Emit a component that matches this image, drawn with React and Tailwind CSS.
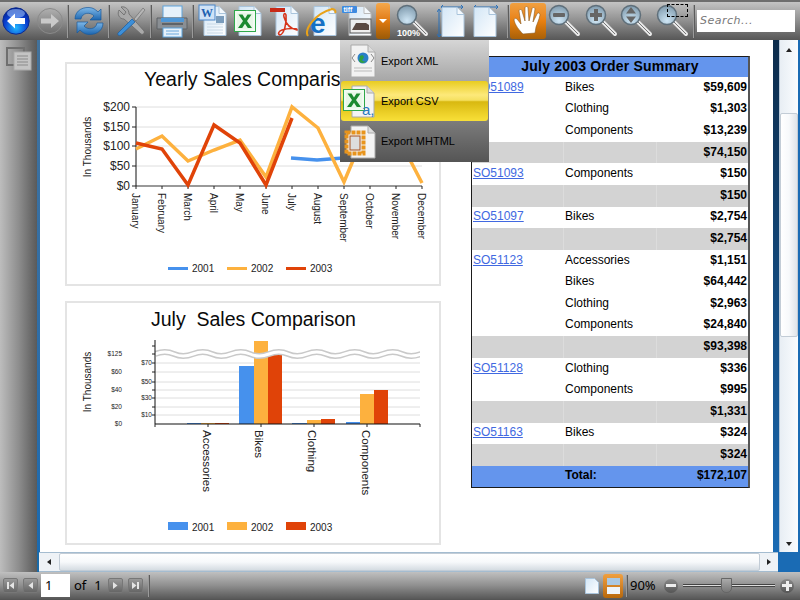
import React from 'react'

const months = ['January','February','March','April','May','June','July','August','September','October','November','December']
const arial = { fontFamily: '"Liberation Sans", Arial, sans-serif' }

const rows = [
  ['SO51089','Bikes','$59,609'],['','Clothing','$1,303'],['','Components','$13,239'],['sum','','$74,150'],
  ['SO51093','Components','$150'],['sum','','$150'],
  ['SO51097','Bikes','$2,754'],['sum','','$2,754'],
  ['SO51123','Accessories','$1,151'],['','Bikes','$64,442'],['','Clothing','$2,963'],['','Components','$24,840'],['sum','','$93,398'],
  ['SO51128','Clothing','$336'],['','Components','$995'],['sum','','$1,331'],
  ['SO51163','Bikes','$324'],['sum','','$324'],
]

const Defs = () => (
  <svg width="0" height="0" className="absolute">
    <defs>
      <linearGradient id="doc" x1="0" y1="0" x2="1" y2="1"><stop offset="0" stopColor="#d3e6f6"/><stop offset="1" stopColor="#ffffff"/></linearGradient>
      <radialGradient id="ball" cx="0.5" cy="0.75" r="0.8"><stop offset="0" stopColor="#22b8ff"/><stop offset="0.55" stopColor="#0a3fd0"/><stop offset="1" stopColor="#021a80"/></radialGradient>
      <linearGradient id="gray" x1="0" y1="0" x2="0" y2="1"><stop offset="0" stopColor="#b0b0b0"/><stop offset="1" stopColor="#6d6d6d"/></linearGradient>
      <linearGradient id="blue" x1="0" y1="0" x2="0" y2="1"><stop offset="0" stopColor="#7fb8e8"/><stop offset="1" stopColor="#1c66b0"/></linearGradient>
      <radialGradient id="lens" cx="0.5" cy="0.8" r="0.8"><stop offset="0" stopColor="#cfe6f5"/><stop offset="1" stopColor="#7f9aad"/></radialGradient>
      <clipPath id="plot"><rect x="155" y="340" width="265" height="90"/></clipPath>
    </defs>
  </svg>
)

const Page = ({ stroke = '#a9c4dc' }) => (
  <>
    <path d="M6 2.5h15l7 7v22H6z" fill="url(#doc)" stroke={stroke}/>
    <path d="M21 2.5v7h7" fill="#f4f9fd" stroke={stroke}/>
  </>
)

const Ico = ({ w = 32, children, className = '' }) => (
  <svg width={w} height="34" viewBox={`0 0 ${w} 34`} className={`shrink-0 ${className}`}>{children}</svg>
)

const Sep = ({ h = 'h-[33px]' }) => <div className={`w-[2px] ${h} bg-[#9a9a9a] border-r border-[#5c5c5c] shrink-0`} />
const Sep2 = ({ ml }) => <div className={ml}><Sep /></div>

const Magnifier = ({ children }) => (
  <Ico w={33}>
    <path d="M18 18l12 12" stroke="#e8e8e8" strokeWidth="4" strokeLinecap="round"/>
    <path d="M18 18l12 12" stroke="#777" strokeWidth="1" />
    <circle cx="11" cy="11" r="9.5" fill="url(#lens)" stroke="#5f6f7a" strokeWidth="1.5"/>
    {children}
  </Ico>
)

function ExcelBadge({ x = 0, y = 0 }) {
  return (
    <g transform={`translate(${x} ${y})`}>
      <rect x="0.5" y="0.5" width="21" height="21" fill="#f2fbf2" stroke="#2fa84a"/>
      <rect x="3" y="3" width="16" height="16" fill="#e8f7e8"/>
      <path d="M4.5 4.5h4l2.5 4 2.5-4h4l-4.5 6.5 5 7h-4.2l-2.8-4.3-2.8 4.3h-4.2l5-7z" fill="#1c8a30"/>
    </g>
  )
}

function Toolbar() {
  return (
    <div className="h-[40px] flex items-center shrink-0 pl-[2px] bg-gradient-to-b from-[#c4c4c4] via-[#8f8f8f] to-[#575757] border-t-2 border-[#6e6e6e]">
      <svg width="28" height="28" viewBox="0 0 28 28" className="shrink-0">
        <circle cx="14" cy="14" r="13.2" fill="url(#ball)" stroke="#0a2a90"/>
        <ellipse cx="14" cy="6.5" rx="9" ry="4.5" fill="#8fb4f5" opacity="0.65"/>
        <path d="M5 14l8-7.5v4.5h10v6H13v4.5z" fill="#fff"/>
      </svg>
      <svg width="28" height="28" viewBox="0 0 28 28" className="shrink-0 ml-[6px]">
        <circle cx="14" cy="14" r="12.5" fill="url(#gray)" stroke="#8a8a8a"/>
        <path d="M23 14l-8-7v4.5H5v5h10V21z" fill="#c9c9c9"/>
      </svg>
      <Sep2 ml="ml-[3px]" />
      <Ico w={33} className="ml-[3px] -mr-[1px]">
        <path d="M3 15C3 6 12 2 20 4c3 1 5 3 6 4l3-3v11H18l4-4c-3-4-12-4-13 3z" fill="url(#blue)" stroke="#1a5a9c" strokeWidth="0.7"/>
        <path d="M31 19c0 9-9 13-17 11-3-1-5-3-6-4l-3 3V18h11l-4 4c3 4 12 4 13-3z" fill="url(#blue)" stroke="#1a5a9c" strokeWidth="0.7"/>
      </Ico>
      <Sep2 ml="ml-[4px]" />
      <Ico w={32} className="ml-[4px]">
        <path d="M7 3l5 5-2 3-5-5c-2 4 0 9 5 9l17 15c2 1 4-1 3-3L15 10c0-5-4-8-8-7z" fill="#a9a9a9" stroke="#6a6a6a" strokeWidth="0.8"/>
        <path d="M29 4l-9 11 2 2 9-11z" fill="#b5b5b5" stroke="#666" strokeWidth="0.6"/>
        <path d="M18 15l-14 14c-1 2 1 3 3 2l14-13z" fill="#3d8fd8" stroke="#1b5c9e" strokeWidth="0.7"/>
      </Ico>
      <Sep2 ml="ml-[4px]" />
      <Ico w={32} className="ml-[4px]">
        <rect x="7" y="2" width="19" height="12" fill="#e6f1fa" stroke="#5ea4dc"/>
        <path d="M1 14h30v11H1z" fill="#8a8f94" stroke="#5c6064"/>
        <rect x="5" y="14" width="23" height="4" fill="#4f97d6"/>
        <rect x="6" y="19" width="21" height="2" fill="#5e6368"/>
        <rect x="7" y="24" width="19" height="9" fill="#e6f1fa" stroke="#5ea4dc"/>
        <path d="M10 27h13M10 30h13" stroke="#6aa8dc"/>
      </Ico>
      <Sep2 ml="ml-[4px]" />
      <Ico w={32} className="ml-[4px]">
        <Page />
        <rect x="1" y="1" width="16" height="15" fill="#cfe2f6" stroke="#4a86c8"/>
        <text x="3" y="13" fontSize="12" fontWeight="700" fontFamily="Liberation Serif" fill="#1d5fb0">W</text>
        <rect x="18" y="12" width="8" height="7" fill="#7a9cbc"/>
        <path d="M9 20h16M9 23h16M9 26h16M9 29h16" stroke="#c8d8e6"/>
      </Ico>
      <Ico w={33} className="ml-[3px]">
        <Page />
        <ExcelBadge x="1" y="6" />
      </Ico>
      <Ico w={32} className="ml-[4px]">
        <Page />
        <rect x="0" y="4" width="15" height="4" fill="#c82a18"/>
        <path d="M10 31c4-1 7-12 6-20-1-3-3-1-2 2 2 7 7 12 13 13 1-2-9-2-15 0-3 1-5 4-2 5z" fill="none" stroke="#d6351c" strokeWidth="1.6"/>
      </Ico>
      <Ico w={34} className="ml-[4px]">
        <g transform="translate(2 0)"><Page /></g>
        <text x="4" y="29" fontSize="28" fontWeight="700" fontFamily="Liberation Sans" fill="#1670c4">e</text>
        <path d="M2 32C-2 26 8 10 26 5c3 0 4 2 3 4" fill="none" stroke="#e8a21a" strokeWidth="2"/>
      </Ico>
      <Ico w={33} className="ml-[2px]">
        <g transform="translate(1 0)"><Page stroke="#bbbbbb" /></g>
        <rect x="0" y="2" width="15" height="7" rx="1" fill="#3d8ae0"/>
        <text x="1.5" y="8" fontSize="7" fontWeight="700" fontFamily="Liberation Sans" fill="#fff">tiff</text>
        <rect x="8" y="15" width="21" height="14" fill="#eee" stroke="#555"/>
        <path d="M10 26l4-7h10l3 2v5z" fill="#5b4a42"/>
      </Ico>
      <div className="ml-[1px] w-[14px] h-[36px] shrink-0 rounded-[3px] flex items-center justify-center bg-gradient-to-b from-[#f5a84a] via-[#e07a10] to-[#9a5a08]">
        <div className="w-0 h-0 border-l-[4px] border-r-[4px] border-t-[4px] border-l-transparent border-r-transparent border-t-white" />
      </div>
      <div className="ml-[6px] relative shrink-0">
        <Magnifier />
        <span className="absolute left-[1px] top-[24px] text-[9px] font-bold text-white leading-[10px]" style={arial}>100%</span>
      </div>
      <Ico w={28} className="ml-[8px] -mr-[2px]">
        <path d="M2 6v27M0 8l2-3 2 3M0 30l2 3 2-3" stroke="#2a70b8" fill="none"/>
        <path d="M4 3h22M6 1l-2 2 2 2M24 1l2 2-2 2" stroke="#2a70b8" fill="none"/>
        <g transform="translate(-1 1)"><Page /></g>
      </Ico>
      <Ico w={28} className="ml-[10px]">
        <path d="M1 3h24M3 1L1 3l2 2M23 1l2 2-2 2" stroke="#2a70b8" fill="none"/>
        <g transform="translate(-5 1)"><Page /></g>
      </Ico>
      <Sep2 ml="ml-[6px]" />
      <div className="ml-[1px] w-[36px] h-[36px] shrink-0 rounded-[3px] flex items-center justify-center bg-gradient-to-b from-[#f0a040] via-[#e88010] to-[#a86008]">
        <svg width="30" height="32" viewBox="0 0 30 32">
          <path d="M10 29C6 25 2 20 1 15c0-2 2-2 3-1l4 5L6 6c0-2 3-2 3 0l3 10 0-13c0-2 3-2 3 0l1 13 3-12c0-2 3-2 3 0l-2 13 4-8c1-2 3-1 3 1-1 5-3 9-4 12l-1 6z" fill="#fff" stroke="#8a5a20" strokeWidth="0.6"/>
        </svg>
      </div>
      <div className="ml-[2px] shrink-0"><Magnifier><rect x="5" y="9" width="12" height="4" rx="1" fill="#666"/></Magnifier></div>
      <div className="ml-[4px] shrink-0"><Magnifier><path d="M9 5h4v4h4v4h-4v4H9v-4H5V9h4z" fill="#666"/></Magnifier></div>
      <div className="ml-[2px] shrink-0"><Magnifier><path d="M11 3l5 6.5H6zM11 19l5-6.5H6z" fill="#666"/></Magnifier></div>
      <div className="ml-[3px] relative shrink-0">
        <Magnifier />
        <div className="absolute left-[11px] top-[0px] w-[21px] h-[13px] border border-dashed border-black" />
      </div>
      <Sep2 ml="ml-[4px]" />
      <div className="ml-[2px] w-[98px] h-[22px] bg-white flex items-center pl-[3px] text-[11px] italic tracking-[0.5px] text-[#777] shrink-0" style={{ fontFamily: '"DejaVu Sans", sans-serif' }}>Search...</div>
    </div>
  )
}

function Menu() {
  return (
    <div className="absolute left-[340px] top-[40px] w-[149px] h-[122px] z-10 bg-gradient-to-b from-[#d6d6d6] via-[#909090] to-[#555555] flex flex-col text-[11px] text-black" style={arial}>
      <div className="h-[41px] flex items-center pl-[10px] gap-[5px]">
        <svg width="26" height="34" viewBox="0 0 26 34">
          <path d="M1 1h17l7 7v25H1z" fill="#f2f2f2" stroke="#aaa"/><path d="M18 1v7h7" fill="#ddd" stroke="#aaa"/>
          <circle cx="13" cy="14" r="5.5" fill="#2a7fc8"/><path d="M10 12c3-2 5 1 3 3s1 3 3 2c-2 3-6 2-7 0z" fill="#2fa040"/>
          <path d="M5 10l-3 4 3 4M21 10l3 4-3 4" fill="none" stroke="#888"/>
          <path d="M4 24h18M4 27h18" stroke="#bbb"/>
        </svg>
        <span className="pt-[2px]">Export XML</span>
      </div>
      <div className="mx-[1px] h-[40px] rounded-[3px] flex items-center relative pl-[9px] gap-[9px] bg-[linear-gradient(to_bottom,#e8cc20_0%,#fde97a_35%,#f5e060_48%,#d8b810_52%,#ecd028_80%,#f8e038_100%)]">
        <svg width="33" height="34" viewBox="0 0 33 34" className="-ml-[8px]">
          <path d="M10 2h15l7 7v24H10z" fill="#f4f4f4" stroke="#aaa"/><path d="M25 2v7h7" fill="#ddd" stroke="#aaa"/>
          <ExcelBadge x="1" y="5" />
          <text x="20" y="31" fontSize="15" fontFamily="Liberation Sans" fill="#2a78c0">a,</text>
        </svg>
        <span className="-ml-[3px]">Export CSV</span>
      </div>
      <div className="h-[41px] flex items-center pl-[3px] gap-[9px]">
        <svg width="33" height="34" viewBox="0 0 33 34">
          <path d="M8 1h17l7 7v25H8z" fill="#f4f4f4" stroke="#aaa"/><path d="M25 1v7h7" fill="#ddd" stroke="#aaa"/>
          <rect x="3.5" y="7.5" width="17" height="21" fill="#f0f0f0" stroke="#e8941c" strokeWidth="4" strokeDasharray="4 1"/>
          <rect x="7" y="11" width="10" height="14" fill="#ddd" stroke="#a8501c"/>
        </svg>
        <span className="-ml-[4px]">Export MHTML</span>
      </div>
    </div>
  )
}

function LineChart() {
  const y2002 = [149,136,161,150,140,177,107,128,182,120,133,183]
  const y2003 = [143,149,185,125,143,185,118]
  const x = i => 136 + i * 26
  const pts = a => a.map((v, i) => `${x(i)},${v}`).join(' ')
  return (
    <svg width="372" height="220" viewBox="67 64 372 220" className="block" style={arial}>
      <text x="144" y="86" fontSize="19.5" fill="#0a0a0a">Yearly Sales Comparison</text>
      {[107,127,146,166].map(v => <line key={v} x1="136" x2="422" y1={v} y2={v} stroke="#dedede"/>)}
      <line x1="136" x2="422" y1="186" y2="186" stroke="#777" strokeWidth="1.5"/>
      <line x1="136" x2="136" y1="107" y2="186" stroke="#111"/>
      {[[107,'$200'],[127,'$150'],[146,'$100'],[166,'$50'],[186,'$0']].map(([v, t]) => (
        <g key={t}><line x1="132" x2="136" y1={v} y2={v} stroke="#222"/><text x="130" y={v + 4} fontSize="12" textAnchor="end" fill="#222">{t}</text></g>
      ))}
      <text transform="translate(91 147) rotate(-90)" fontSize="10" textAnchor="middle" fill="#222">In Thousands</text>
      {months.map((m, i) => (
        <g key={m}>
          <line x1={x(i)} x2={x(i)} y1="186" y2="189" stroke="#222"/>
          <text transform={`translate(${x(i) - 4} 193) rotate(90)`} fontSize="10" fill="#222">{m}</text>
        </g>
      ))}
      <polyline points="291,158 317,160 343,158 370,150" fill="none" stroke="#4691ed" strokeWidth="3.5"/>
      <polyline points={pts(y2002)} fill="none" stroke="#fdb13e" strokeWidth="3.5"/>
      <polyline points={pts(y2003)} fill="none" stroke="#e04308" strokeWidth="3.5"/>
      {[[168,'#4691ed','2001'],[227,'#fdb13e','2002'],[286,'#e04308','2003']].map(([lx, c, t]) => (
        <g key={t}><rect x={lx} y="267" width="20" height="3" fill={c}/><text x={lx + 24} y="272" fontSize="10" fill="#222">{t}</text></g>
      ))}
    </svg>
  )
}

function BarChart() {
  const bars = [
    [187,14,423,'#4691ed'],[201,14,423,'#fdb13e'],[215,14,423,'#e04308'],
    [239,15,366,'#4691ed'],[268,14,353,'#e04308'],[254,14,341,'#fdb13e'],
    [292,15,423,'#4691ed'],[307,14,420,'#fdb13e'],[321,14,419,'#e04308'],
    [346,14,422,'#4691ed'],[360,14,394,'#fdb13e'],[374,14,390,'#e04308'],
  ]
  const wave = 'M155 354 q10 -4 19 0 t19 0 t19 0 t19 0 t19 0 t19 0 t19 0 t19 0 t19 0 t19 0 t19 0 t19 0 t19 0 t19 0 t19 0'
  return (
    <svg width="372" height="240" viewBox="67 303 372 240" className="block" style={arial}>
      <text x="151" y="326" fontSize="19.5" fill="#0a0a0a" xmlSpace="preserve">July  Sales Comparison</text>
      {[363,372,382,390,398,407,415].map(v => <line key={v} x1="155" x2="420" y1={v} y2={v} stroke="#dedede"/>)}
      {[363,372,382,390,398,407,415,354,346].map(v => <line key={v} x1="152" x2="155" y1={v} y2={v} stroke="#222"/>)}
      {bars.map(([bx, w, by, c]) => <rect key={bx} x={bx} y={by} width={w} height={424 - by} fill={c}/>)}
      <g clipPath="url(#plot)">
        <path d={wave} fill="none" stroke="#c9c9c9" strokeWidth="6"/>
        <path d={wave} fill="none" stroke="#fff" strokeWidth="3"/>
      </g>
      <line x1="155" x2="155" y1="340" y2="424" stroke="#111"/>
      <line x1="155" x2="420" y1="424" y2="424" stroke="#111" strokeWidth="1.2"/>
      {[155,208,261,314,367,420].map(v => <line key={v} x1={v} x2={v} y1="424" y2="427" stroke="#222"/>)}
      {[[354,'$125',122],[363,'$70',152],[372,'$60',122],[382,'$50',152],[390,'$40',122],[398,'$30',152],[407,'$20',122],[415,'$10',152],[424,'$0',122]].map(([v, t, ax]) => (
        <text key={t} x={ax} y={v + 2} fontSize="6.5" textAnchor="end" fill="#222">{t}</text>
      ))}
      <text transform="translate(91 382) rotate(-90)" fontSize="10" textAnchor="middle" fill="#222">In Thousands</text>
      {[[203,'Accessories'],[255,'Bikes'],[308,'Clothing'],[362,'Components']].map(([lx, t]) => (
        <text key={t} transform={`translate(${lx} 430) rotate(90)`} fontSize="11.5" fill="#222">{t}</text>
      ))}
      {[[168,'#4691ed','2001'],[227,'#fdb13e','2002'],[286,'#e04308','2003']].map(([lx, c, t]) => (
        <g key={t}><rect x={lx} y="522" width="20" height="8" fill={c}/><text x={lx + 24} y="531" fontSize="10" fill="#222">{t}</text></g>
      ))}
    </svg>
  )
}

function OrderTable() {
  return (
    <div className="w-[279px] h-[432px] border border-[#1b1b1b] border-r-2 border-r-[#555] text-[12px] text-black shrink-0" style={arial}>
      <div className="h-[20px] bg-[#6495ed] text-center font-bold text-[14px] tracking-[0.2px] leading-[18px]">July 2003 Order Summary</div>
      {rows.map((r, i) => {
        const sum = r[0] === 'sum'
        return (
          <div key={i} className={`h-[21.6px] grid grid-cols-[91px_93px_92px] items-center ${sum ? 'bg-[#d3d3d3]' : 'bg-white'}`}>
            <div className="pl-[1px] pb-[2px]">{!sum && r[0] && <a className="text-[#4169e1] underline">{r[0]}</a>}</div>
            <div className={`h-full flex items-center pl-[2px] pb-[2px] ${sum ? 'border-l border-[#dcdcdc]' : ''}`}>{r[1]}</div>
            <div className={`h-full flex items-center justify-end pr-[1px] pb-[2px] font-bold ${sum ? 'border-l border-[#dcdcdc]' : ''}`}>{r[2]}</div>
          </div>
        )
      })}
      <div className="h-[21.6px] bg-[#6495ed] grid grid-cols-[91px_93px_92px] items-center font-bold">
        <div />
        <div className="pl-[2px] pb-[2px]">Total:</div>
        <div className="text-right pr-[1px] pb-[2px]">$172,107</div>
      </div>
    </div>
  )
}

function VScroll() {
  return (
    <div className="w-[19px] flex flex-col bg-gradient-to-r from-[#e8eef4] to-[#fafcfe] border-l border-[#b8c8d8] shrink-0">
      <div className="h-[20px] flex items-center justify-center shrink-0"><div className="w-0 h-0 border-l-[3px] border-r-[3px] border-b-[4px] border-l-transparent border-r-transparent border-b-[#222]" /></div>
      <div className="h-[53px] shrink-0" />
      <div className="h-[224px] shrink-0 rounded-[2px] border border-[#c2ccd6] bg-gradient-to-r from-white via-[#f7f9fb] to-[#dfe4e9]" />
      <div className="flex-1" />
      <div className="h-[16px] flex items-center justify-center shrink-0"><div className="w-0 h-0 border-l-[3px] border-r-[3px] border-t-[4px] border-l-transparent border-r-transparent border-t-[#222]" /></div>
    </div>
  )
}

function HScroll() {
  return (
    <div className="h-[20px] flex shrink-0">
      <div className="w-[2px] bg-[#1a6aa8]" />
      <div className="flex-1 flex bg-[#eef2f6] border-y border-[#a4bcd0]">
        <div className="w-[20px] flex items-center justify-center"><div className="w-0 h-0 border-t-[3px] border-b-[3px] border-r-[4px] border-t-transparent border-b-transparent border-r-[#222]" /></div>
        <div className="flex-1 rounded-[2px] border border-[#c2ccd6] bg-gradient-to-b from-white via-[#f7f9fb] to-[#d5dce2]" />
        <div className="w-[18px] flex items-center justify-center"><div className="w-0 h-0 border-t-[3px] border-b-[3px] border-l-[4px] border-t-transparent border-b-transparent border-l-[#222]" /></div>
      </div>
      <div className="w-[22px] bg-[#1a6bb4]" />
    </div>
  )
}

const NavBtn = ({ d }) => (
  <div className="w-[15px] h-[15px] rounded-[2px] bg-gradient-to-b from-[#999] to-[#666] border border-[#777] flex items-center justify-center shrink-0">
    <svg width="9" height="9" viewBox="0 0 9 9"><path d={d} fill="#e4e4e4"/></svg>
  </div>
)

const RoundBtn = ({ plus }) => (
  <div className="w-[14px] h-[14px] rounded-full bg-gradient-to-b from-[#8a8a8a] to-[#555] flex items-center justify-center relative shrink-0">
    <div className="w-[10px] h-[3px] bg-[#eee]" />
    {plus && <div className="absolute w-[3px] h-[10px] bg-[#eee]" />}
  </div>
)

function Footer() {
  return (
    <div className="h-[28px] shrink-0 flex items-center pl-[3px] pr-[6px] bg-gradient-to-b from-[#c0c0c0] via-[#8f8f8f] to-[#585858] border-b border-[#555] text-[13px] text-black" style={{ fontFamily: '"Noto Sans", sans-serif' }}>
      <NavBtn d="M1 1h2v7H1zM8 1v7L3.5 4.5z" />
      <div className="ml-[5px]"><NavBtn d="M7 1v7L2.5 4.5z" /></div>
      <div className="ml-[3px] w-[29px] h-[23px] bg-white flex items-center pl-[4px] shrink-0">1</div>
      <span className="ml-[4px]">of</span>
      <span className="ml-[8px]">1</span>
      <div className="ml-[6px]"><NavBtn d="M2 1v7l4.5-3.5z" /></div>
      <div className="ml-[5px]"><NavBtn d="M1 1v7l4.5-3.5zM6 1h2v7H6z" /></div>
      <div className="ml-[5px]"><Sep h="h-[22px]" /></div>
      <div className="flex-1" />
      <svg width="14" height="16" viewBox="0 0 14 16"><path d="M.5.5h9l4 4v11H.5z" fill="url(#doc)" stroke="#a9c4dc"/></svg>
      <div className="ml-[4px] w-[20px] h-[24px] rounded-[3px] bg-gradient-to-b from-[#f0a040] to-[#b86808] flex flex-col items-center justify-center gap-[2px]">
        <div className="w-[13px] h-[7px] bg-[#a9c8e4]" />
        <div className="w-[13px] h-[7px] bg-[#eef4fa]" />
      </div>
      <div className="ml-[3px]"><Sep h="h-[22px]" /></div>
      <span className="ml-[2px] w-[34px]">90%</span>
      <RoundBtn />
      <div className="ml-[5px] w-[92px] h-[3px] border-y border-[#444] bg-[#ddd] relative shrink-0">
        <div className="absolute left-[38px] -top-[7px] w-[11px] h-[15px] bg-gradient-to-b from-[#aaa] to-[#777] border border-[#666] rounded-b-[5px]" />
      </div>
      <div className="ml-[5px]"><RoundBtn plus /></div>
    </div>
  )
}

export default function App() {
  return (
    <div className="relative w-[800px] h-[600px] overflow-hidden flex flex-col bg-[#777]">
      <Defs />
      <Toolbar />
      <Menu />
      <div className="flex-1 flex min-h-0">
        <div className="w-[37px] shrink-0 flex justify-center pt-[7px] bg-gradient-to-r from-[#bdbdbd] via-[#8e8e8e] to-[#5a5a5a]">
          <svg width="26" height="24" viewBox="0 0 26 24">
            <rect x="1" y="1" width="17" height="17" fill="none" stroke="#6f6f6f" strokeWidth="2"/>
            <rect x="8" y="5" width="17" height="18" fill="#c4c4c4" stroke="#aaa"/>
            <path d="M11 9h11M11 12h11M11 15h11M11 18h11" stroke="#8a8a8a"/>
          </svg>
        </div>
        <div className="flex-1 flex flex-col min-w-0">
          <div className="flex-1 flex min-h-0">
            <div className="w-[3px] bg-gradient-to-b from-[#42729c] to-[#1a6ab0] shrink-0" />
            <div className="w-[733px] bg-white flex pl-[25px] pt-[16px] overflow-hidden shrink-0">
              <div className="flex flex-col gap-[15px] pt-[6px] shrink-0">
                <div className="border-2 border-[#e4e4e4] w-[376px] h-[224px]"><LineChart /></div>
                <div className="border-2 border-[#e4e4e4] w-[376px] h-[244px]"><BarChart /></div>
              </div>
              <div className="ml-[30px]"><OrderTable /></div>
            </div>
            <div className="w-[6px] bg-gradient-to-b from-[#0c2c4c] to-[#1a6bb4] shrink-0" />
            <VScroll />
            <div className="flex-1 bg-[#1a6bb4]" />
          </div>
          <HScroll />
        </div>
      </div>
      <Footer />
    </div>
  )
}
